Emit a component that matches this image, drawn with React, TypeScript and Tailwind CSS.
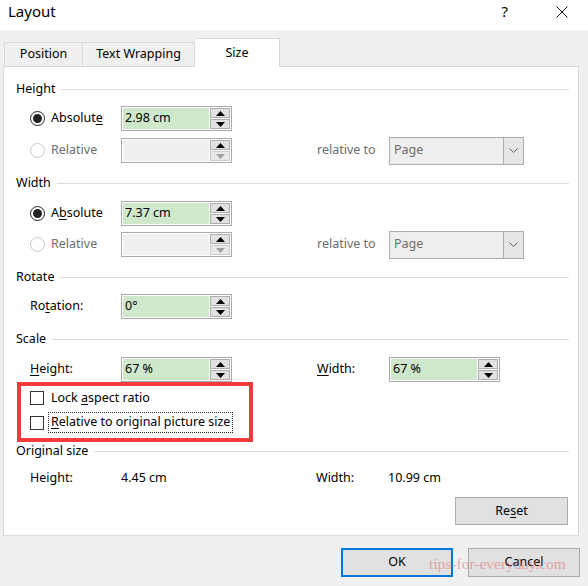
import React from "react";

const FONT = { fontFamily: '"Noto Sans", "Open Sans", sans-serif' };

function U({ children }: { children: React.ReactNode }) {
  return <span className="underline underline-offset-[2px] decoration-1">{children}</span>;
}

function SectionHeader({ label }: { label: string }) {
  return (
    <div className="flex h-[18px] items-center">
      <span className="leading-none">{label}</span>
      <div className="ml-[6px] h-px flex-1 bg-[#dcdcdc]" />
    </div>
  );
}

function Triangle({ dir, disabled }: { dir: "up" | "down"; disabled?: boolean }) {
  const fill = disabled ? "#a0a0a0" : "#000";
  return (
    <svg width="9" height="5" viewBox="0 0 9 5">
      {dir === "up" ? <polygon points="0,5 9,5 4.5,0" fill={fill} /> : <polygon points="0,0 9,0 4.5,5" fill={fill} />}
    </svg>
  );
}

function Spinner({ value, disabled }: { value?: string; disabled?: boolean }) {
  return (
    <div className="flex h-[25px] w-[111px] border border-[#ababab] bg-white p-px">
      <div
        className={
          disabled
            ? "flex flex-1 items-center bg-[#f0f0f0] pl-[2px]"
            : "flex flex-1 items-center bg-[#cfe8cc] pl-[2px] text-black"
        }
      >
        {value}
      </div>
      <div className="ml-px flex w-[20px] flex-col gap-px">
        <div className="flex flex-1 items-center justify-center border border-[#adadad] bg-[#e1e1e1]">
          <Triangle dir="up" />
        </div>
        <div
          className={
            disabled
              ? "flex flex-1 items-center justify-center border border-[#cccccc] bg-[#e8e8e8]"
              : "flex flex-1 items-center justify-center border border-[#adadad] bg-[#e1e1e1]"
          }
        >
          <Triangle dir="down" disabled={disabled} />
        </div>
      </div>
    </div>
  );
}

function Radio({ checked, disabled }: { checked?: boolean; disabled?: boolean }) {
  return (
    <div
      className={
        disabled
          ? "flex h-[15px] w-[15px] items-center justify-center rounded-full border border-[#c6c6c6] bg-white"
          : "flex h-[15px] w-[15px] items-center justify-center rounded-full border border-[#222] bg-white"
      }
    >
      {checked && <div className="h-[9px] w-[9px] rounded-full bg-[#222]" />}
    </div>
  );
}

function Dropdown() {
  return (
    <div className="flex h-[28px] w-[135px] border border-[#adadad] bg-[#efefef]">
      <div className="flex flex-1 items-center pl-[4px] text-[#6d6d6d]">Page</div>
      <div className="flex w-[20px] items-center justify-center border-l border-[#adadad] bg-[#e5e5e5]">
        <svg width="9" height="5" viewBox="0 0 9 5">
          <polyline points="0.5,0.5 4.5,4.5 8.5,0.5" fill="none" stroke="#606060" strokeWidth="1" />
        </svg>
      </div>
    </div>
  );
}

function RadioRow({
  label,
  checked,
  disabled,
  value,
  withRelativeTo,
}: {
  label: React.ReactNode;
  checked?: boolean;
  disabled?: boolean;
  value?: string;
  withRelativeTo?: boolean;
}) {
  return (
    <div className="flex h-[25px] items-center pl-[14px]">
      <div className="flex w-[91px] items-center">
        <Radio checked={checked} disabled={disabled} />
        <span className={disabled ? "ml-[6px] text-[#6d6d6d]" : "ml-[6px]"}>{label}</span>
      </div>
      <Spinner value={value} disabled={disabled} />
      {withRelativeTo && (
        <>
          <span className="ml-[85px] w-[72px] text-[#6d6d6d]">relative to</span>
          <Dropdown />
        </>
      )}
    </div>
  );
}

function Checkbox() {
  return <div className="h-[14px] w-[14px] border border-[#333] bg-white" />;
}

function Button({ children, primary }: { children: React.ReactNode; primary?: boolean }) {
  return (
    <div
      className={
        primary
          ? "flex h-[29px] w-[112px] items-center justify-center border-2 border-[#0078d7] bg-[#e1e1e1]"
          : "flex h-[29px] w-[112px] items-center justify-center border border-[#adadad] bg-[#e1e1e1]"
      }
    >
      {children}
    </div>
  );
}

export default function App() {
  return (
    <div className="flex h-[586px] w-[588px] flex-col bg-[#f0f0f0] text-[12.5px] text-black" style={FONT}>
      {/* title bar */}
      <div className="flex h-[30px] items-center bg-white pb-[7px] pl-[8px]">
        <span className="text-[15px]">Layout</span>
        <span className="ml-auto text-[15px]">?</span>
        <svg className="ml-[48px] mr-[20px]" width="12" height="12" viewBox="0 0 12 12">
          <line x1="0.5" y1="0.5" x2="11.5" y2="11.5" stroke="#111" strokeWidth="1" />
          <line x1="11.5" y1="0.5" x2="0.5" y2="11.5" stroke="#111" strokeWidth="1" />
        </svg>
      </div>

      {/* tabs */}
      <div className="flex h-[36px] items-end pl-[4px]">
        <div className="flex h-[24px] w-[79px] items-center justify-center border border-b-0 border-[#d9d9d9] bg-[#f0f0f0]">
          Position
        </div>
        <div className="flex h-[24px] w-[112px] items-center justify-center border border-b-0 border-l-0 border-[#d9d9d9] bg-[#f0f0f0]">
          Text Wrapping
        </div>
        <div className="relative z-10 -mb-px flex h-[29px] w-[85px] items-center justify-center border border-b-0 border-l-0 border-[#d9d9d9] bg-white">
          Size
        </div>
      </div>

      {/* size panel */}
      <div className="ml-[3px] flex h-[470px] w-[576px] flex-col border border-[#d9d9d9] bg-white pl-[12px] pr-[9px] pt-[13px]">
        <SectionHeader label="Height" />
        <div className="mt-[8px]">
          <RadioRow
            label={
              <>
                Absolut<U>e</U>
              </>
            }
            checked
            value="2.98 cm"
          />
        </div>
        <div className="mt-[7px]">
          <RadioRow label="Relative" disabled withRelativeTo />
        </div>

        <div className="mt-[11px]">
          <SectionHeader label="Width" />
        </div>
        <div className="mt-[9px]">
          <RadioRow
            label={
              <>
                A<U>b</U>solute
              </>
            }
            checked
            value="7.37 cm"
          />
        </div>
        <div className="mt-[6px]">
          <RadioRow label="Relative" disabled withRelativeTo />
        </div>

        <div className="mt-[11px]">
          <SectionHeader label="Rotate" />
        </div>
        <div className="mt-[8px] flex h-[25px] items-center pl-[14px]">
          <span className="w-[91px]">
            Ro<U>t</U>ation:
          </span>
          <Spinner value="0°" />
        </div>

        <div className="mt-[11px]">
          <SectionHeader label="Scale" />
        </div>
        <div className="mt-[9px] flex h-[25px] items-center pl-[14px]">
          <span className="w-[91px]">
            <U>H</U>eight:
          </span>
          <Spinner value="67 %" />
          <span className="ml-[85px] w-[72px]">
            <U>W</U>idth:
          </span>
          <Spinner value="67 %" />
        </div>

        {/* highlighted options */}
        <div className="ml-[1px] flex h-[60px] w-[236px] flex-col border-4 border-[#f23b3b] pl-[9px] pt-[2px]">
          <div className="flex h-[20px] items-center">
            <Checkbox />
            <span className="ml-[7px]">
              Lock <U>a</U>spect ratio
            </span>
          </div>
          <div className="mt-[4px] flex h-[21px] items-center">
            <Checkbox />
            <span className="ml-[4px] border border-dotted border-[#222] px-[2px]">
              <U>R</U>elative to original picture size
            </span>
          </div>
        </div>

        <SectionHeader label="Original size" />
        <div className="mt-[9px] flex h-[18px] items-center pl-[14px]">
          <span className="w-[91px]">Height:</span>
          <span className="w-[195px]">4.45 cm</span>
          <span className="w-[72px]">Width:</span>
          <span>10.99 cm</span>
        </div>

        <div className="mt-[10px] flex justify-end pr-px">
          <div className="flex h-[28px] w-[113px] items-center justify-center border border-[#adadad] bg-[#e1e1e1]">
            Re<U>s</U>et
          </div>
        </div>
      </div>

      {/* dialog buttons */}
      <div className="relative mt-[12px] flex justify-end gap-[15px] pr-[8px]">
        <Button primary>OK</Button>
        <Button>Cancel</Button>
        <span
          className="pointer-events-none absolute left-[429px] top-[4px] text-[15.5px] text-[#e27a7a] opacity-60"
          style={{ fontFamily: '"Liberation Serif", serif' }}
        >
          tips-for-everyday.com
        </span>
      </div>
    </div>
  );
}
